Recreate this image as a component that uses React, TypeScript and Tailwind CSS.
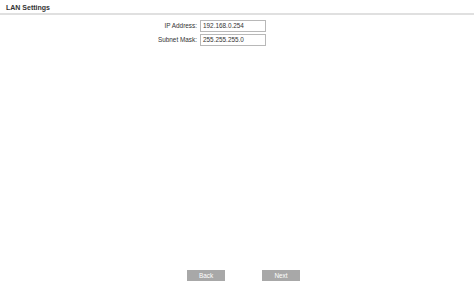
export default function App() {
  return (
    <div className="w-[474px] h-[284px] bg-white flex flex-col font-['Liberation_Sans',Arial,sans-serif] text-[6.4px] text-[#333]">
      {/* TITLE */}
      <div className="pl-[6px] pt-[4px] h-[13px] font-bold text-[7px] leading-[8px] text-[#333]">LAN Settings</div>
      <div className="h-[2px] bg-[#e0e0e0]" />

      {/* FORM */}
      <div className="flex flex-col gap-[2px] pt-[5px]">
        <div className="flex items-center">
          <div className="w-[200px] text-right pr-[3px]">IP Address:</div>
          <div className="w-[66px] h-[12px] border border-[#b8b8b8] px-[2px] leading-[10px]">192.168.0.254</div>
        </div>
        <div className="flex items-center">
          <div className="w-[200px] text-right pr-[3px]">Subnet Mask:</div>
          <div className="w-[66px] h-[12px] border border-[#b8b8b8] px-[2px] leading-[10px]">255.255.255.0</div>
        </div>
      </div>

      <div className="flex-1" />

      {/* BUTTONS */}
      <div className="flex pl-[187px] gap-[37px] pb-[3px]">
        <button className="w-[38px] h-[11px] bg-[#a8a8a8] text-white text-[6.4px] leading-[11px]">Back</button>
        <button className="w-[38px] h-[11px] bg-[#a8a8a8] text-white text-[6.4px] leading-[11px]">Next</button>
      </div>
    </div>
  );
}
